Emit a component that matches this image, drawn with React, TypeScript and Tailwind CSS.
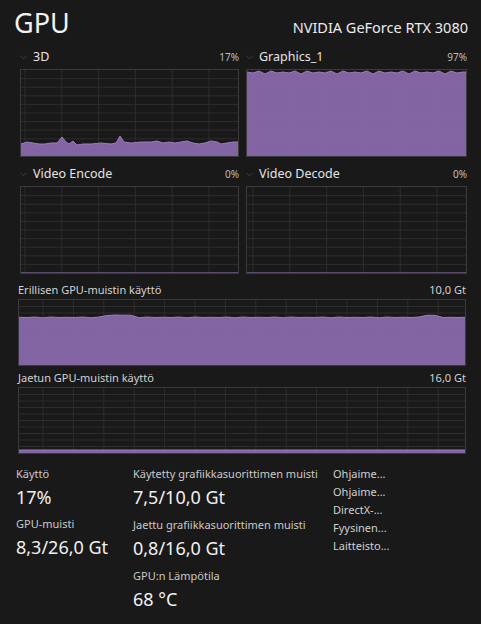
import React from 'react';

const FILL = '#8767a8';
const EDGE = '#9b7dbd';
const GRID = '#2d2d2d';
const BORDER = '#3a3a3a';

type Pt = [number, number];

// grid lines: horizontal divisions + scrolled vertical lines
function Grid({ w, h, rows, offset, step }: { w: number; h: number; rows: number; offset: number; step: number }) {
    const lines: React.ReactNode[] = [];
    for (let i = 1; i < rows; i++) {
        const y = (h / rows) * i;
        lines.push(<line key={'h' + i} x1={0} x2={w} y1={y} y2={y} stroke={GRID} strokeWidth={1} />);
    }
    for (let x = offset, i = 0; x < w - 2; x += step, i++) {
        lines.push(<line key={'v' + i} x1={x} x2={x} y1={0} y2={h} stroke={GRID} strokeWidth={1} />);
    }
    return <g>{lines}</g>;
}

function Chart({ w, h, pts, offset, step, className }: { w: number; h: number; pts: Pt[]; offset: number; step: number; className?: string }) {
    const line = pts.map(p => p.join(',')).join(' ');
    const area = `0,${h} ${line} ${w},${h}`;
    return (
        <div className={'border ' + (className ?? '')} style={{ borderColor: BORDER }}>
            <svg width={w} height={h} viewBox={`0 0 ${w} ${h}`} className="block">
                <Grid w={w} h={h} rows={10} offset={offset} step={step} />
                <polygon points={area} fill={FILL} fillOpacity={0.97} />
                <polyline points={line} fill="none" stroke={EDGE} strokeWidth={1} />
            </svg>
        </div>
    );
}

function wave(w: number, base: number, amp: number, stepX: number, bumps: Pt[] = []): Pt[] {
    const out: Pt[] = [];
    let i = 0;
    for (let x = 0; x <= w; x += stepX, i++) {
        let y = base + (i % 2 === 0 ? 0 : amp) + ((i * 7) % 3 === 0 ? amp * 0.5 : 0);
        for (const [bx, by] of bumps) {
            if (Math.abs(bx - x) < stepX) y = by;
        }
        out.push([x, y]);
    }
    out.push([w, base + amp * 0.5]);
    return out;
}

const d3: Pt[] = [[0, 74], [6, 72], [12, 73], [18, 74], [24, 74], [30, 73], [36, 73], [41, 67], [45, 72], [48, 74], [52, 71], [56, 75], [62, 74], [70, 74], [80, 73], [90, 74], [95, 73], [99, 66], [103, 72], [110, 73], [120, 72], [130, 72], [136, 71], [142, 73], [148, 72], [154, 73], [160, 72], [166, 71], [172, 73], [178, 74], [184, 73], [190, 71], [196, 72], [200, 74], [206, 73], [212, 72], [217, 72]];
const gfx = wave(219, 1, 2, 6);
const dedicated = wave(446, 17, 0.5, 8, [[90, 15.5], [100, 15], [110, 15.2], [410, 15.3]]);
const shared = wave(446, 62, 0, 16);
const flat: Pt[] = [[0, 86], [219, 86]];

function Chevron() {
    return (
        <svg width="7" height="5" viewBox="0 0 7 5" className="mr-[6px] mt-[1px]">
            <path d="M0.5 0.8 L3.5 3.8 L6.5 0.8" fill="none" stroke="#3e3e3e" strokeWidth="1" />
        </svg>
    );
}

function EngineCell({ name, pct, pts, offset, w }: { name: string; pct: string; pts: Pt[]; offset: number; w: number }) {
    return (
        <div className="flex flex-col">
            <div className="flex items-center h-[22px] pb-[2px]">
                <Chevron />
                <span className="text-[12.5px] text-[#e4e4e4] flex-1">{name}</span>
                <span className="text-[10px] text-[#bdbdbd]">{pct}</span>
            </div>
            <Chart w={w} h={86} pts={pts} offset={offset} step={36.8} />
        </div>
    );
}

function Stat({ label, value }: { label: string; value: string }) {
    return (
        <div className="flex flex-col">
            <div className="h-[16px] leading-[16px] text-[11px] text-[#c9c9c9] whitespace-nowrap">{label}</div>
            <div className="h-[26px] leading-[26px] mt-[2px] text-[18px] text-[#f0f0f0] whitespace-nowrap">{value}</div>
        </div>
    );
}

export default function App() {
    return (
        <div className="w-[481px] h-[624px] bg-[#191919] text-white overflow-hidden" style={{ fontFamily: '"Noto Sans", "Open Sans", sans-serif' }}>
            <div className="flex justify-between items-end h-[44px] pl-[14px] pr-[13px] pb-[4px]">
                <span className="text-[27px] leading-[34px] text-[#f2f2f2]">GPU</span>
                <span className="text-[14.5px] leading-[22px] text-[#ececec] pb-[2px]">NVIDIA GeForce RTX 3080</span>
            </div>
            <div className="grid grid-cols-[219px_221px] gap-x-[7px] gap-y-[7px] ml-[20px] mt-[3px]">
                <EngineCell name="3D" pct="17%" pts={d3} offset={4} w={217} />
                <EngineCell name="Graphics_1" pct="97%" pts={gfx} offset={6} w={219} />
                <EngineCell name="Video Encode" pct="0%" pts={flat} offset={4} w={217} />
                <EngineCell name="Video Decode" pct="0%" pts={flat} offset={6} w={219} />
            </div>
            <div className="flex flex-col ml-[18px] mr-[15px] mt-[4px]">
                <div className="flex justify-between items-center h-[21px] pt-[4px] text-[11px] text-[#d2d2d2]">
                    <span>Erillisen GPU-muistin käyttö</span>
                    <span>10,0 Gt</span>
                </div>
                <Chart w={446} h={65} pts={dedicated} offset={24} step={30.4} />
                <div className="flex justify-between items-center h-[21px] pt-[3px] text-[11px] text-[#d2d2d2]">
                    <span>Jaetun GPU-muistin käyttö</span>
                    <span>16,0 Gt</span>
                </div>
                <Chart w={446} h={65} pts={shared} offset={24} step={30.4} />
            </div>
            <div className="flex ml-[16px] mt-[12px]">
                <div className="w-[117px] flex flex-col gap-[6px]">
                    <Stat label="Käyttö" value="17%" />
                    <Stat label="GPU-muisti" value="8,3/26,0 Gt" />
                </div>
                <div className="w-[200px] flex flex-col gap-[7px]">
                    <Stat label="Käytetty grafiikkasuorittimen muisti" value="7,5/10,0 Gt" />
                    <Stat label="Jaettu grafiikkasuorittimen muisti" value="0,8/16,0 Gt" />
                    <Stat label="GPU:n Lämpötila" value="68 °C" />
                </div>
                <div className="flex flex-col text-[11px] text-[#d0d0d0] leading-[18px] -mt-[1px]">
                    <span>Ohjaime...</span>
                    <span>Ohjaime...</span>
                    <span>DirectX-...</span>
                    <span>Fyysinen...</span>
                    <span>Laitteisto...</span>
                </div>
            </div>
        </div>
    );
}
